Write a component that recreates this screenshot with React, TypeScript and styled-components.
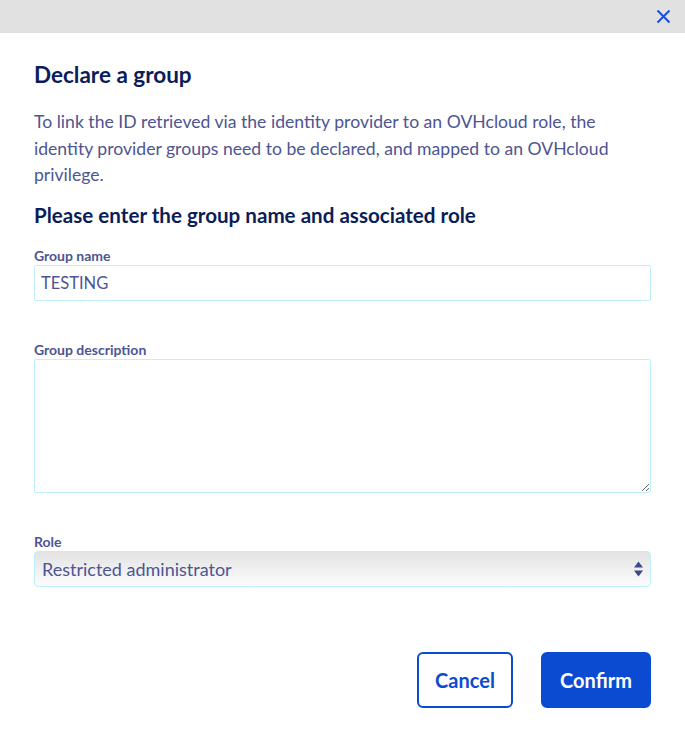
import { createGlobalStyle } from "styled-components";
import styled from "styled-components";

const GlobalStyle = createGlobalStyle`
  html, body {
    margin: 0;
    padding: 0;
    background: #ffffff;
  }
  body {
    font-family: Lato, "Noto Sans", sans-serif;
  }
  * {
    box-sizing: border-box;
  }
`;

const Modal = styled.div`
  width: 685px;
  min-height: 733px;
  background: #ffffff;
  display: flex;
  flex-direction: column;
`;

const TopBar = styled.div`
  height: 33px;
  background: #e1e1e1;
  display: flex;
  justify-content: flex-end;
  align-items: center;
  padding-right: 14px;
`;

const CloseButton = styled.button`
  border: 0;
  background: transparent;
  padding: 0;
  width: 16px;
  height: 17px;
  display: flex;
  align-items: center;
  justify-content: center;
  cursor: pointer;
`;

const Body = styled.div`
  padding: 28px 34px 0 34px;
  display: flex;
  flex-direction: column;
`;

const Title = styled.h1`
  margin: 0;
  font-size: 22.5px;
  line-height: 28px;
  font-weight: 700;
  color: #0b1d59;
`;

const Intro = styled.p`
  margin: 20px 0 0 0;
  font-size: 17.6px;
  line-height: 26.5px;
  color: #4d5592;
`;

const SubTitle = styled.h2`
  margin: 13px 0 0 0;
  font-size: 20.6px;
  line-height: 26px;
  font-weight: 700;
  color: #0b1d59;
`;

const Field = styled.div<{ $gap: number }>`
  display: flex;
  flex-direction: column;
  margin-top: ${(p) => p.$gap}px;
`;

const Label = styled.label`
  font-size: 14px;
  line-height: 18px;
  font-weight: 700;
  color: #4d5592;
`;

const TextInput = styled.input`
  height: 36px;
  width: 100%;
  border: 1px solid #bdf0fb;
  border-radius: 2px;
  padding: 0 6px;
  font-family: inherit;
  font-size: 16.5px;
  color: #4d5592;
  background: #ffffff;
  outline: none;
`;

const TextArea = styled.textarea`
  height: 134px;
  width: 100%;
  border: 1px solid #bdf0fb;
  border-radius: 2px;
  padding: 6px;
  font-family: inherit;
  font-size: 16.5px;
  color: #4d5592;
  background: #ffffff;
  outline: none;
  resize: both;
  display: block;
`;

const SelectWrap = styled.div`
  position: relative;
  height: 36px;
`;

const Select = styled.select`
  appearance: none;
  width: 100%;
  height: 36px;
  border: 1px solid #bdf0fb;
  border-radius: 4px;
  padding: 0 30px 0 7px;
  font-family: inherit;
  font-size: 18px;
  color: #4d5592;
  background: linear-gradient(#e3e3e3, #fcfcfc);
  outline: none;
`;

const Arrows = styled.svg`
  position: absolute;
  right: 8px;
  top: 10px;
  pointer-events: none;
`;

const Actions = styled.div`
  display: flex;
  justify-content: flex-end;
  gap: 28px;
  margin-top: 65px;
`;

const Button = styled.button<{ $primary?: boolean }>`
  height: 56px;
  padding: 0;
  width: ${(p) => (p.$primary ? 110 : 96)}px;
  border-radius: 6px;
  border: 2px solid #0b4bd1;
  background: ${(p) => (p.$primary ? "#0b4bd1" : "#ffffff")};
  color: ${(p) => (p.$primary ? "#ffffff" : "#0b4bd1")};
  font-family: inherit;
  font-size: 20px;
  font-weight: 700;
  cursor: pointer;
`;

export default function App() {
  return (
    <>
      <GlobalStyle />
      <Modal>
        <TopBar>
          <CloseButton aria-label="Close">
            <svg width="15" height="15" viewBox="0 0 15 15">
              <path d="M1.5 1.5 L13.5 13.5 M13.5 1.5 L1.5 13.5" stroke="#1a4fd6" strokeWidth="2" />
            </svg>
          </CloseButton>
        </TopBar>
        <Body>
          <Title>Declare a group</Title>
          <Intro>
            To link the ID retrieved via the identity provider to an OVHcloud role, the identity
            provider groups need to be declared, and mapped to an OVHcloud privilege.
          </Intro>
          <SubTitle>Please enter the group name and associated role</SubTitle>
          <Field $gap={19}>
            <Label>Group name</Label>
            <TextInput defaultValue="TESTING" />
          </Field>
          <Field $gap={40}>
            <Label>Group description</Label>
            <TextArea />
          </Field>
          <Field $gap={40}>
            <Label>Role</Label>
            <SelectWrap>
              <Select defaultValue="restricted">
                <option value="restricted">Restricted administrator</option>
                <option value="admin">Administrator</option>
              </Select>
              <Arrows width="9" height="16" viewBox="0 0 9 16">
                <path d="M4.5 0.5 L9 6.5 L0 6.5 Z M0 9.5 L9 9.5 L4.5 15.5 Z" fill="#3d4a8a" />
              </Arrows>
            </SelectWrap>
          </Field>
          <Actions>
            <Button>Cancel</Button>
            <Button $primary>Confirm</Button>
          </Actions>
        </Body>
      </Modal>
    </>
  );
}
